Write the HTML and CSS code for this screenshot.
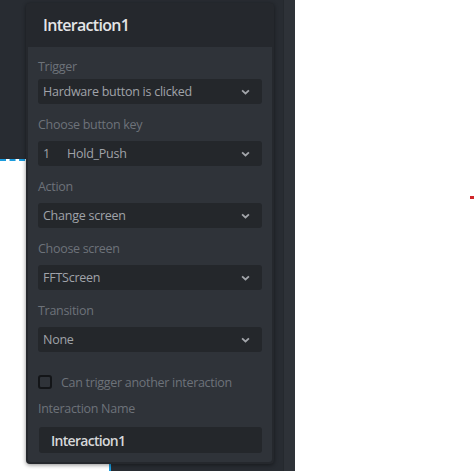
FILE: index.html
```html
<!DOCTYPE html>
<html>
<head>
<meta charset="utf-8">
<link rel="stylesheet" href="styles.css">
</head>
<body>
<div class="app">
  <div class="workspace">
    <div class="stage">
      <div class="screen"></div>
    </div>
    <div class="scroll-strip"></div>

    <div class="panel">
      <div class="panel-header">Interaction1</div>
      <div class="panel-body">
        <div class="field first">
          <div class="label">Trigger</div>
          <div class="select"><span class="value">Hardware button is clicked</span><svg class="chev" viewBox="0 0 10 6" width="9" height="6"><path d="M1.2 1.2 L5 4.6 L8.8 1.2" fill="none" stroke="currentColor" stroke-width="2"/></svg></div>
        </div>
        <div class="field">
          <div class="label">Choose button key</div>
          <div class="select"><span class="value"><span class="key-num">1</span>Hold_Push</span><svg class="chev" viewBox="0 0 10 6" width="9" height="6"><path d="M1.2 1.2 L5 4.6 L8.8 1.2" fill="none" stroke="currentColor" stroke-width="2"/></svg></div>
        </div>
        <div class="field">
          <div class="label">Action</div>
          <div class="select"><span class="value">Change screen</span><svg class="chev" viewBox="0 0 10 6" width="9" height="6"><path d="M1.2 1.2 L5 4.6 L8.8 1.2" fill="none" stroke="currentColor" stroke-width="2"/></svg></div>
        </div>
        <div class="field">
          <div class="label">Choose screen</div>
          <div class="select"><span class="value">FFTScreen</span><svg class="chev" viewBox="0 0 10 6" width="9" height="6"><path d="M1.2 1.2 L5 4.6 L8.8 1.2" fill="none" stroke="currentColor" stroke-width="2"/></svg></div>
        </div>
        <div class="field">
          <div class="label">Transition</div>
          <div class="select"><span class="value">None</span><svg class="chev" viewBox="0 0 10 6" width="9" height="6"><path d="M1.2 1.2 L5 4.6 L8.8 1.2" fill="none" stroke="currentColor" stroke-width="2"/></svg></div>
        </div>
        <label class="check-row"><span class="checkbox"></span><span class="check-text">Can trigger another interaction</span></label>
        <div class="field name-field">
          <div class="label">Interaction Name</div>
          <div class="text-input">Interaction1</div>
        </div>
      </div>
    </div>
  </div>
  <div class="canvas">
    <span class="red-mark"></span>
  </div>
</div>
</body>
</html>
```

FILE: styles.css
```css
html, body {
  margin: 0;
  padding: 0;
}
body {
  width: 474px;
  height: 471px;
  overflow: hidden;
  background: #ffffff;
  font-family: "Open Sans", "Noto Sans", sans-serif;
}
.app {
  display: flex;
  height: 471px;
}
.workspace {
  position: relative;
  width: 295px;
  height: 471px;
  display: flex;
  background: #2a2e34;
}
.stage {
  position: relative;
  width: 283px;
  height: 100%;
  background: #282c32;
}
.screen {
  position: absolute;
  left: 0;
  top: 159px;
  width: 109px;
  bottom: 0;
  background: #ffffff;
  border-top: 2px dashed #1b9bdc;
  border-right: 2px solid #1b9bdc;
}
.scroll-strip {
  width: 11px;
  border-left: 1px solid #25292e;
  background: #2e3238;
}
.canvas {
  position: relative;
  flex: 1;
  background: #ffffff;
}
.red-mark {
  position: absolute;
  right: 0;
  top: 196px;
  width: 4px;
  height: 3px;
  background: #d0262a;
}

.panel {
  position: absolute;
  left: 26px;
  top: 3px;
  width: 248px;
  height: 461px;
  background: #25282d;
  border-radius: 4px;
  box-shadow: 0 1px 4px rgba(0, 0, 0, 0.45);
  display: flex;
  flex-direction: column;
}
.panel-header {
  height: 44px;
  padding-left: 17px;
  display: flex;
  align-items: center;
  color: #e4e5e7;
  font-size: 16px;
  font-weight: 600;
  letter-spacing: -0.7px;
  box-sizing: border-box;
}
.panel-body {
  flex: 1;
  margin: 0 2px 2px;
  background: #2f3339;
  padding: 11px 10px 8px;
  border-radius: 0 0 3px 3px;
}
.field {
  margin-top: 12px;
}
.field.first {
  margin-top: 0;
}
.label {
  font-size: 12.5px;
  line-height: 18px;
  color: #6d7279;
  letter-spacing: -0.3px;
  margin-bottom: 7px;
}
.field.first .label {
  margin-bottom: 3px;
}
.select {
  height: 25px;
  border-radius: 3px;
  background: #24272b;
  display: flex;
  align-items: center;
  justify-content: space-between;
  padding: 0 12px 0 5px;
  color: #a0a3a9;
  font-size: 12.5px;
  letter-spacing: -0.25px;
}
.key-num {
  display: inline-block;
  width: 24px;
}
.chev {
  color: #a3a6ab;
  display: block;
}
.check-row {
  display: flex;
  align-items: center;
  height: 18px;
  margin-top: 21px;
}
.checkbox {
  width: 14px;
  height: 14px;
  box-sizing: border-box;
  border: 2px solid #131518;
  border-radius: 3px;
  margin-right: 9px;
}
.check-text {
  font-size: 12.5px;
  color: #6d7279;
  letter-spacing: -0.3px;
}
.name-field {
  margin-top: 9px;
}
.name-field .label {
  margin-bottom: 9px;
}
.text-input {
  height: 26px;
  margin-left: 1px;
  border-radius: 3px;
  background: #24272b;
  display: flex;
  align-items: center;
  padding-left: 12px;
  color: #d6d7d9;
  font-size: 14px;
  font-weight: 600;
  letter-spacing: -0.7px;
}
```
